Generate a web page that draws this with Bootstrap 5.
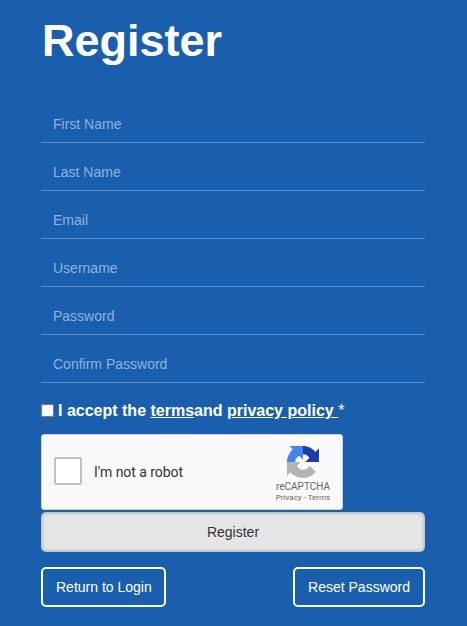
<!DOCTYPE html>
<html lang="en"><head><meta charset="utf-8">
<link href="https://cdn.jsdelivr.net/npm/bootstrap@5.3.0/dist/css/bootstrap.min.css" rel="stylesheet">
<style>
html,body{height:100%}
body{background:#1a5fae;font-family:"Liberation Sans",Arial,sans-serif;color:#fff;overflow:hidden}
.reg-wrap{padding:0 42px 0 41px}
.reg-title{font-size:45px;font-weight:700;line-height:58px;margin:12px 0 25px;padding-left:1px}
.reg-field{height:48px;margin:0;background:transparent;border:0;border-bottom:1px solid #5b8ac4;border-radius:0;padding:10px 12px 0;font-size:14px;color:#fff;box-shadow:none}
.reg-field:focus{background:transparent;color:#fff;box-shadow:none;border-color:#5b8ac4}
.reg-field::placeholder{color:#8fb1dc;opacity:1}
.reg-accept{font-size:16px;font-weight:700;line-height:20px;margin-top:18px;margin-bottom:13px}
.reg-accept input{width:13px;height:13px;margin:0 4px 0 0;vertical-align:-1px}
.reg-accept a{color:#fff}
.cap-box{width:302px;height:76px;background:#f9f9f9;border:1px solid #d3d3d3;border-radius:3px;color:#333;font-family:Roboto,sans-serif}
.cap-check{width:28px;height:28px;background:#fff;border:2px solid #c1c1c1;border-radius:2px;margin-left:12px;margin-right:12px;margin-bottom:2px}
.cap-label{font-size:14px;letter-spacing:-.05px}
.cap-logo{width:72px;margin-left:auto;margin-right:3px;text-align:center;color:#666;line-height:1;margin-top:4px}
.cap-name{font-size:10px;margin-top:4px;margin-bottom:2px}
.cap-links{font-size:8px;white-space:nowrap}
.reg-submit{display:block;width:100%;height:40px;margin-top:2px;background:#e5e5e5;border:0;border-radius:5px;font-size:14px;color:#333;box-shadow:inset 0 0 4px rgba(0,0,0,.35)}
.reg-actions{margin-top:15px}
.reg-link{height:40px;padding:0 13px;border:2px solid #fff;border-radius:5px;color:#fff;font-size:14px;line-height:36px;text-decoration:none;background:transparent}
.reg-link:first-child{padding-right:12px}
.reg-link:hover{color:#fff}
</style></head>
<body>
<div class="reg-wrap">
<h1 class="reg-title">Register</h1>
<form>
<input class="form-control reg-field" type="text" placeholder="First Name">
<input class="form-control reg-field" type="text" placeholder="Last Name">
<input class="form-control reg-field" type="email" placeholder="Email">
<input class="form-control reg-field" type="text" placeholder="Username">
<input class="form-control reg-field" type="password" placeholder="Password">
<input class="form-control reg-field" type="password" placeholder="Confirm Password">
<div class="reg-accept"><input type="checkbox" id="acc"><label for="acc">I accept the <a href="#">terms</a>and <a href="#">privacy policy </a> <span class="fw-normal">*</span></label></div>
<div class="cap-box d-flex align-items-center">
<div class="cap-check"></div>
<div class="cap-label">I'm not a robot</div>
<div class="cap-logo">
<svg width="32" height="32" viewBox="0 0 64 64" class="d-block mx-auto">
<defs><path id="capArc" d="M64 31.955l-.033-1.37V4.687l-7.16 7.16C50.948 4.674 42.033.093 32.05.093c-10.4 0-19.622 4.96-25.458 12.64l11.736 11.86a15.55 15.55 0 0 1 4.754-5.334c2.05-1.6 4.952-2.906 8.968-2.906.485 0 .86.057 1.135.163 4.976.393 9.288 3.14 11.828 7.124l-8.307 8.307 26.283.003"/></defs>
<use href="#capArc" fill="#1c3aa9"/>
<use href="#capArc" fill="#4285f4" transform="rotate(-90 32 32)"/>
<use href="#capArc" fill="#b4b4b4" transform="rotate(180 32 32)"/>
</svg>
<div class="cap-name">reCAPTCHA</div>
<div class="cap-links">Privacy - Terms</div>
</div>
</div>
<button type="button" class="reg-submit">Register</button>
<div class="reg-actions d-flex justify-content-between">
<a class="reg-link" href="#">Return to Login</a>
<a class="reg-link" href="#">Reset Password</a>
</div>
</form>
</div>
<script src="https://cdn.jsdelivr.net/npm/bootstrap@5.3.0/dist/js/bootstrap.bundle.min.js"></script>
</body></html>
